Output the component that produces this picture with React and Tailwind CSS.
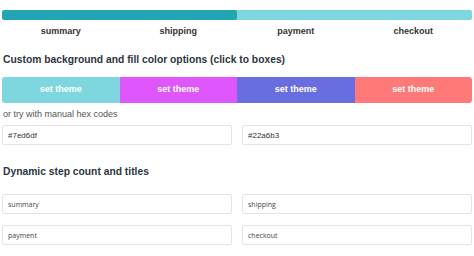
import React, { useState } from 'react';

const themes = [
  { bg: '#7ed6df', fill: '#22a6b3' },
  { bg: '#e056fd', fill: '#be2edd' },
  { bg: '#686de0', fill: '#4834d4' },
  { bg: '#ff7979', fill: '#eb4d4b' },
];

export default function App() {
  const [bgColor, setBgColor] = useState('#7ed6df');
  const [fillColor, setFillColor] = useState('#22a6b3');
  const [steps, setSteps] = useState(['summary', 'shipping', 'payment', 'checkout']);
  const current = 2;

  const updateStep = (i, value) => {
    const next = [...steps];
    next[i] = value;
    setSteps(next);
  };

  return (
    <div className="w-[474px] h-[256px] overflow-hidden bg-white px-[2px] font-['Liberation_Sans',Arial,sans-serif]">
      {/* progress */}
      <div className="mt-[10px] h-[10px] rounded-[2px] overflow-hidden flex" style={{ backgroundColor: bgColor }}>
        <div className="h-full rounded-[2px]" style={{ width: `${(current / steps.length) * 100}%`, backgroundColor: fillColor }} />
      </div>
      <div className="grid grid-cols-4 mt-[5px] h-[12px] text-[9px] leading-[12px] font-bold text-[#333] text-center">
        {steps.map((s, i) => (
          <div key={i}>{s}</div>
        ))}
      </div>

      <h2 className="mt-[16px] pl-[1px] text-[10.3px] leading-[13px] font-bold text-[#2d3540]">
        Custom background and fill color options (click to boxes)
      </h2>
      <div className="mt-[11px] grid grid-cols-4 h-[26px] rounded-[3px] overflow-hidden">
        {themes.map((t, i) => (
          <button
            key={i}
            className="flex items-center justify-center text-[9px] font-bold text-white"
            style={{ backgroundColor: t.bg }}
            onClick={() => { setBgColor(t.bg); setFillColor(t.fill); }}
          >
            set theme
          </button>
        ))}
      </div>
      <p className="mt-[5px] pl-[1px] text-[9px] leading-[12px] text-[#555]">or try with manual hex codes</p>
      <div className="mt-[5px] grid grid-cols-2 gap-[10px]">
        <input
          value={bgColor}
          onChange={(e) => setBgColor(e.target.value)}
          className="h-[20px] border border-[#e4e4e4] rounded-[2px] px-[5px] text-[8px] text-[#333] outline-none"
        />
        <input
          value={fillColor}
          onChange={(e) => setFillColor(e.target.value)}
          className="h-[20px] border border-[#e4e4e4] rounded-[2px] px-[5px] text-[8px] text-[#333] outline-none"
        />
      </div>

      <h2 className="mt-[20px] pl-[1px] text-[10.3px] leading-[13px] font-bold text-[#2d3540]">
        Dynamic step count and titles
      </h2>
      <div className="mt-[16px] grid grid-cols-2 gap-x-[10px] gap-y-[11px]">
        {steps.map((s, i) => (
          <input
            key={i}
            value={s}
            onChange={(e) => updateStep(i, e.target.value)}
            className="h-[20px] border border-[#e4e4e4] rounded-[2px] px-[5px] text-[7px] text-[#444] font-['Open_Sans',sans-serif] outline-none"
          />
        ))}
      </div>
    </div>
  );
}
